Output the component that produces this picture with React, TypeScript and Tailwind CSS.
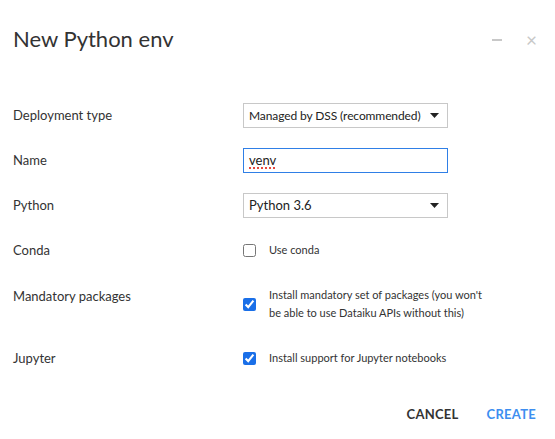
import * as React from "react"

function Caret() {
  return (
    <svg width="9" height="5" viewBox="0 0 9 5" className="shrink-0">
      <path d="M0 0h9L4.5 5z" fill="#222" />
    </svg>
  )
}

function SelectBox({ value, textClass = "" }: { value: string; textClass?: string }) {
  return (
    <div className="flex h-[25px] w-[205px] items-center justify-between border border-[#c8c8c8] bg-white pl-[5px] pr-[8px] text-[13px] text-[#222]">
      <span className={`whitespace-nowrap ${textClass}`}>{value}</span>
      <Caret />
    </div>
  )
}

function Check({ checked }: { checked?: boolean }) {
  return (
    <input
      type="checkbox"
      defaultChecked={checked}
      className="m-0 h-[13px] w-[13px] shrink-0 accent-[#1a6fe8]"
    />
  )
}

function Row({
  label,
  children,
  className = "",
}: {
  label: string
  children: React.ReactNode
  className?: string
}) {
  return (
    <div className={`flex items-center ${className}`}>
      <div className="w-[230px] shrink-0 text-[13px] text-[#333]">{label}</div>
      {children}
    </div>
  )
}

export default function App() {
  return (
    <div
      className="flex h-[439px] w-[555px] flex-col bg-white text-[#333]"
      style={{ fontFamily: "Lato, 'Liberation Sans', sans-serif" }}
    >
      {/* header */}
      <div className="flex h-[78px] items-center justify-between pl-[13px] pr-[18px]">
        <h1 className="text-[22px] leading-none text-[#333]">New Python env</h1>
        <div className="flex items-center gap-[24px] text-[#c8c8c8]">
          <span className="mt-[1px] block h-[2px] w-[10px] bg-[#c8c8c8]" />
          <span className="text-[19px] leading-none">×</span>
        </div>
      </div>

      {/* form */}
      <div className="flex flex-col pl-[13px] pt-[25px]">
        <Row label="Deployment type" className="h-[25px]">
          <SelectBox value="Managed by DSS (recommended)" textClass="text-[12px] tracking-[-0.1px]" />
        </Row>
        <Row label="Name" className="mt-[20px] h-[25px]">
          <div className="flex h-[25px] w-[205px] items-center border border-[#2f7fe6] pl-[5px] text-[13px] text-[#222]">
            <span className="underline decoration-[#e5483e] decoration-dotted decoration-[1.5px] underline-offset-[3px]">
              venv
            </span>
          </div>
        </Row>
        <Row label="Python" className="mt-[20px] h-[25px]">
          <SelectBox value="Python 3.6" />
        </Row>
        <Row label="Conda" className="mt-[20px] h-[25px]">
          <div className="flex items-center gap-[13px] text-[11px] text-[#333]">
            <Check />
            <span>Use conda</span>
          </div>
        </Row>
        <div className="mt-[23px] flex items-start">
          <div className="w-[230px] shrink-0 text-[13px] leading-[20px] text-[#333]">
            Mandatory packages
          </div>
          <div className="flex items-center gap-[13px]">
            <Check checked />
            <span className="w-[224px] text-[11px] leading-[18px] text-[#333]">
              Install mandatory set of packages (you won't be able to use Dataiku APIs without this)
            </span>
          </div>
        </div>
        <Row label="Jupyter" className="mt-[24px] h-[25px]">
          <div className="flex items-center gap-[13px] text-[11px] text-[#333]">
            <Check checked />
            <span>Install support for Jupyter notebooks</span>
          </div>
        </Row>
      </div>

      {/* footer */}
      <div className="mt-auto flex h-[50px] items-start justify-end gap-[28px] pr-[19px] pt-[16px]">
        <button className="text-[13px] font-bold tracking-[0.02em] text-[#333]">CANCEL</button>
        <button className="text-[13px] font-bold tracking-[0.02em] text-[#3d8ef0]">CREATE</button>
      </div>
    </div>
  )
}
